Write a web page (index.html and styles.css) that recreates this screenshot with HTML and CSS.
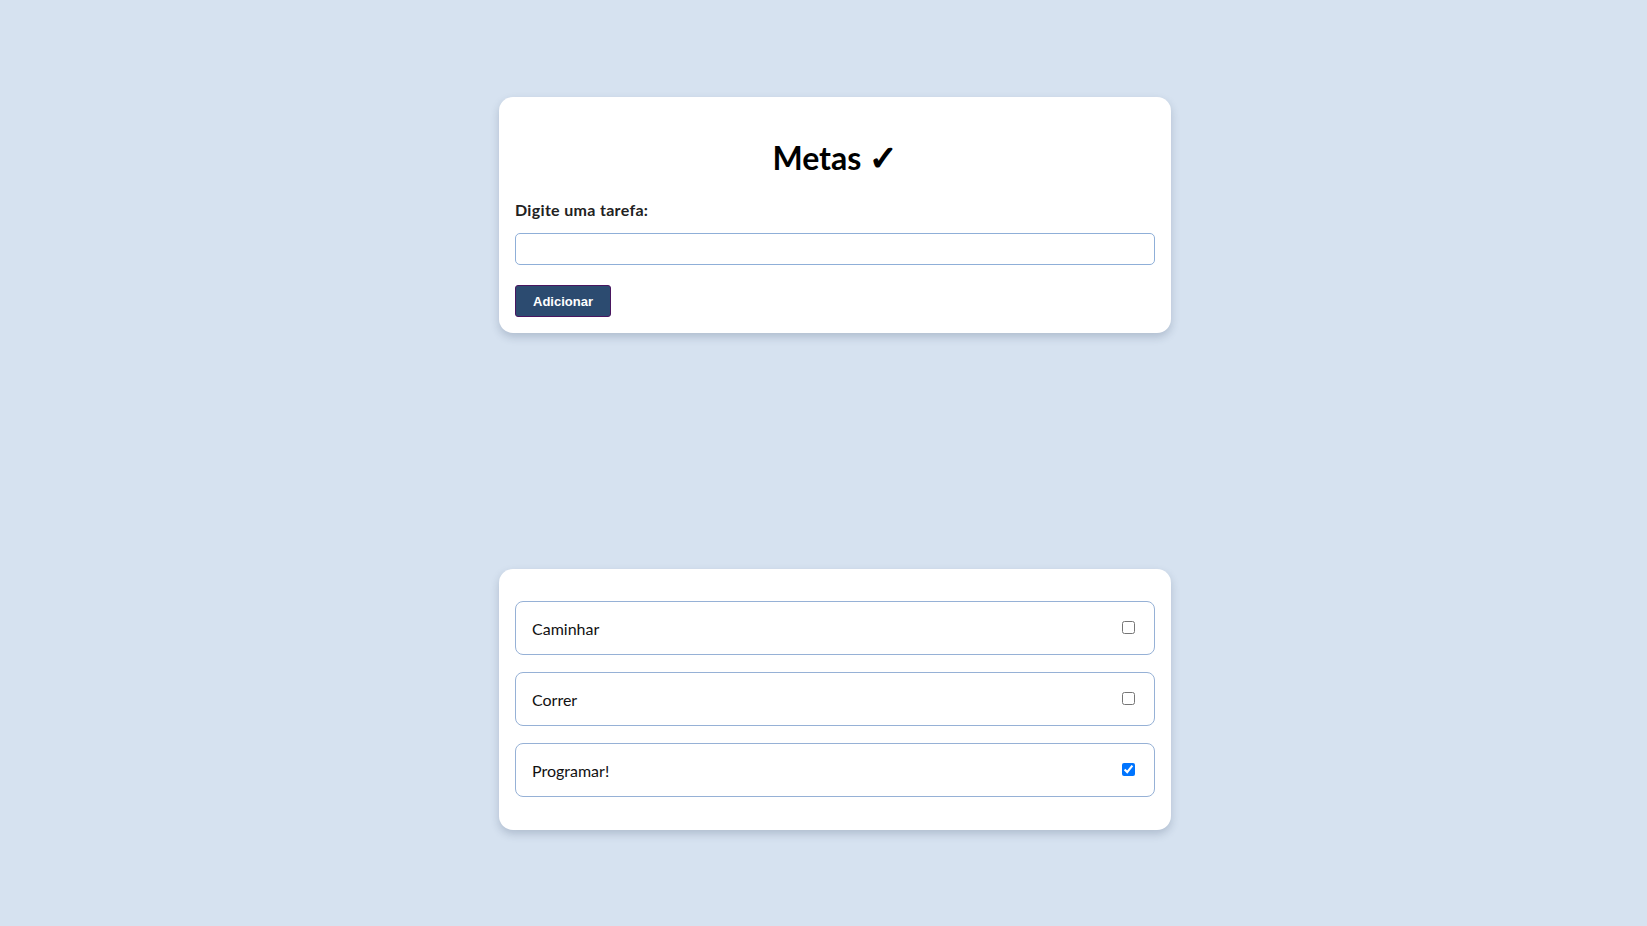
FILE: index.html
```html
<!DOCTYPE html>
<html lang="pt-BR">
<head>
<meta charset="utf-8">
<title>Metas</title>
<link rel="stylesheet" href="styles.css">
</head>
<body>
<main class="page">
  <section class="card form-card">
    <h1 class="title">Metas <span class="check">✓</span></h1>
    <label class="label" for="task">Digite uma tarefa:</label>
    <input class="task-input" id="task" type="text">
    <button class="add-btn" type="button">Adicionar</button>
  </section>
  <section class="card list-card">
    <div class="item"><span class="item-text">Caminhar</span><input type="checkbox" class="item-check"></div>
    <div class="item"><span class="item-text">Correr</span><input type="checkbox" class="item-check"></div>
    <div class="item"><span class="item-text">Programar!</span><input type="checkbox" class="item-check" checked></div>
  </section>
</main>
</body>
</html>
```

FILE: styles.css
```css
html, body {
  margin: 0;
  padding: 0;
}
body {
  background: #d6e2f0;
  font-family: Lato, "Open Sans", sans-serif;
  color: #111;
  min-height: 926px;
}
.page {
  display: flex;
  flex-direction: column;
  align-items: center;
  padding-top: 97px;
  padding-left: 23px;
  gap: 236px;
}
.card {
  width: 672px;
  box-sizing: border-box;
  background: #fff;
  border-radius: 14px;
  box-shadow: 0 4px 8px rgba(40, 60, 90, 0.22);
}
.form-card {
  padding: 16px;
  display: flex;
  flex-direction: column;
  align-items: flex-start;
}
.title {
  align-self: stretch;
  text-align: center;
  font-size: 32px;
  font-weight: 700;
  line-height: 44px;
  height: 44px;
  margin: 23px 0 20px;
  color: #000;
}
.check {
  font-family: "DejaVu Sans", sans-serif;
  font-weight: 700;
  font-size: 34px;
  line-height: 0;
  -webkit-text-stroke: 1.5px #000;
}
.label {
  font-size: 16px;
  font-weight: 700;
  line-height: 20px;
  color: #222;
  margin-bottom: 13px;
  letter-spacing: 0.02em;
}
.task-input {
  align-self: stretch;
  box-sizing: border-box;
  height: 32px;
  margin: 0;
  border: 1px solid #8fafd8;
  border-radius: 5px;
  outline: none;
  font-size: 16px;
}
.add-btn {
  margin-top: 20px;
  box-sizing: border-box;
  width: 96px;
  height: 32px;
  padding: 0;
  background: #2c4b70;
  border: 1px solid #4a1660;
  border-radius: 3px;
  color: #fff;
  font-family: "Liberation Sans", Arial, sans-serif;
  font-weight: 700;
  font-size: 13px;
}
.list-card {
  padding: 32px 16px 33px;
  display: flex;
  flex-direction: column;
  gap: 17px;
}
.item {
  box-sizing: border-box;
  height: 54px;
  padding: 0 16px;
  border: 1px solid #96b1d6;
  border-radius: 8px;
  display: flex;
  align-items: center;
  justify-content: space-between;
}
.item-text {
  font-size: 16px;
  line-height: 20px;
  padding-top: 2px;
}
.item-check {
  width: 13px;
  height: 13px;
  margin: 0 3px 1px 4px;
}
```
